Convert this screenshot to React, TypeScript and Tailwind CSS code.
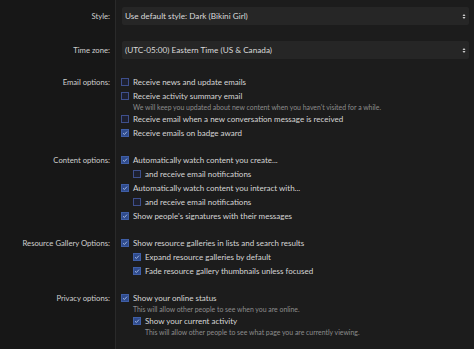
import React from "react"

type Opt = {
  label: string
  checked: boolean
  nested?: boolean
  hint?: string
}

function Box({ checked }: { checked: boolean }) {
  if (checked) {
    return (
      <span className="w-[8px] h-[8px] shrink-0 bg-[#2f4b8c] border border-[#3f5ea6] flex items-center justify-center">
        <svg width="6" height="6" viewBox="0 0 6 6">
          <path d="M1 3.2 L2.4 4.5 L5 1.6" fill="none" stroke="#a9bde8" strokeWidth="0.9" />
        </svg>
      </span>
    )
  }
  return <span className="w-[8px] h-[8px] shrink-0 bg-[#1d2030] border border-[#3e4f8c]" />
}

function Check({ opt }: { opt: Opt }) {
  return (
    <div className={opt.nested ? "pl-[12px]" : ""}>
      <div className="h-[14px] flex items-center gap-[4px] text-[8px] text-[#d6d6d6]">
        <Box checked={opt.checked} />
        <span>{opt.label}</span>
      </div>
      {opt.hint && (
        <div className="h-[10px] -mt-[1px] pl-[12px] text-[6.9px] leading-[10px] text-[#8c8c8c]">{opt.hint}</div>
      )}
    </div>
  )
}

function Row({ label, pt, children }: { label: string; pt: string; children: React.ReactNode }) {
  return (
    <div className="flex">
      <div className={`w-[116px] shrink-0 bg-[#171717] border-r border-[#2a2a2a] pr-[5px] text-right ${pt}`}>
        <div className="h-[14px] leading-[14px] text-[7.7px] text-[#cfcfcf]">{label}</div>
      </div>
      <div className={`flex-1 pl-[5px] pr-[5px] ${pt}`}>{children}</div>
    </div>
  )
}

function Select({ value }: { value: string }) {
  return (
    <div className="h-[18px] bg-[#262626] rounded-[2px] flex items-center justify-between pl-[3px] pr-[3px] text-[8.2px] text-[#dadada]">
      <span>{value}</span>
      <svg width="4" height="7" viewBox="0 0 4 7">
        <path d="M0.5 3 L2 1 L3.5 3 Z" fill="#cfcfcf" />
        <path d="M0.5 4 L2 6 L3.5 4 Z" fill="#cfcfcf" />
      </svg>
    </div>
  )
}

const email: Opt[] = [
  { label: "Receive news and update emails", checked: false },
  {
    label: "Receive activity summary email",
    checked: false,
    hint: "We will keep you updated about new content when you haven't visited for a while.",
  },
  { label: "Receive email when a new conversation message is received", checked: false },
  { label: "Receive emails on badge award", checked: true },
]

const content: Opt[] = [
  { label: "Automatically watch content you create...", checked: true },
  { label: "and receive email notifications", checked: false, nested: true },
  { label: "Automatically watch content you interact with...", checked: true },
  { label: "and receive email notifications", checked: false, nested: true },
  { label: "Show people's signatures with their messages", checked: true },
]

const gallery: Opt[] = [
  { label: "Show resource galleries in lists and search results", checked: true },
  { label: "Expand resource galleries by default", checked: true, nested: true },
  { label: "Fade resource gallery thumbnails unless focused", checked: true, nested: true },
]

const privacy: Opt[] = [
  {
    label: "Show your online status",
    checked: true,
    hint: "This will allow other people to see when you are online.",
  },
  {
    label: "Show your current activity",
    checked: true,
    nested: true,
    hint: "This will allow other people to see what page you are currently viewing.",
  },
]

export default function App() {
  return (
    <div className="w-[474px] h-[349px] overflow-hidden bg-[#1c1c1c] flex flex-col" style={{ fontFamily: "Lato, 'Liberation Sans', sans-serif" }}>
      {/* selects */}
      <div className="flex">
        <div className="w-[116px] shrink-0 bg-[#171717] border-r border-[#2a2a2a] pr-[5px] text-right pt-[7px]">
          <div className="h-[18px] leading-[18px] text-[7.7px] text-[#cfcfcf]">Style:</div>
          <div className="h-[18px] leading-[18px] mt-[16px] text-[7.7px] text-[#cfcfcf]">Time zone:</div>
        </div>
        <div className="flex-1 pl-[6px] pr-[5px] pt-[7px]">
          <Select value="Use default style: Dark (Bikini Girl)" />
          <div className="mt-[16px]">
            <Select value="(UTC-05:00) Eastern Time (US & Canada)" />
          </div>
        </div>
      </div>

      <Row label="Email options:" pt="pt-[16px]">
        {email.map((o, i) => <Check key={i} opt={o} />)}
      </Row>
      <Row label="Content options:" pt="pt-[13px]">
        {content.map((o, i) => <Check key={i} opt={o} />)}
      </Row>
      <Row label="Resource Gallery Options:" pt="pt-[13px]">
        {gallery.map((o, i) => <Check key={i} opt={o} />)}
      </Row>
      <Row label="Privacy options:" pt="pt-[13px]">
        {privacy.map((o, i) => <Check key={i} opt={o} />)}
      </Row>
      <div className="flex flex-1">
        <div className="w-[116px] shrink-0 bg-[#171717] border-r border-[#2a2a2a]" />
        <div className="flex-1" />
      </div>
    </div>
  )
}
